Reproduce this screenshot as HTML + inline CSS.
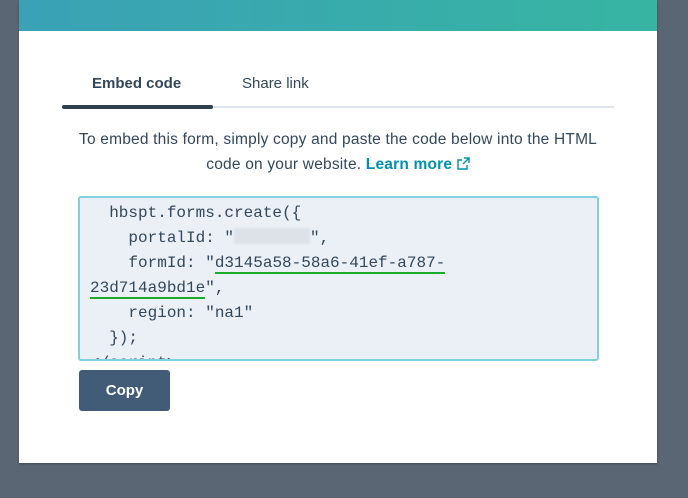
<!DOCTYPE html>
<html><head><style>
*{margin:0;padding:0;box-sizing:border-box}
body{width:688px;height:498px;background:#5b6674;position:relative;overflow:hidden;font-family:"Liberation Sans",sans-serif}
.modal{position:absolute;left:19px;top:0;width:638px;height:463px;background:#fff;box-shadow:0 1px 2px rgba(0,0,0,.3)}
.hdr{height:31px;background:linear-gradient(90deg,#3aa1b6,#37b5a2)}
.tab{position:absolute;top:75px;font-size:15px;color:#33475b}
.line{position:absolute;left:43px;top:106px;width:552px;height:2px;background:#dfe3eb}
.act{position:absolute;left:43px;top:105px;width:151px;height:4px;border-radius:2px;background:#2d3e50}
.desc{position:absolute;left:0;width:638px;text-align:center;font-size:15.5px;letter-spacing:.2px;color:#33475b;top:127px;line-height:25px}
.desc a{color:#0091ae;font-weight:bold;text-decoration:none}
.code{position:absolute;left:59px;top:196px;width:521px;height:165px;background:#eaf0f6;border:2px solid #7fd1de;border-radius:3px;overflow:hidden;font-family:"Liberation Mono",monospace;font-size:16px;line-height:25px;color:#33475b;padding:3px 0 0 10px;white-space:pre}
.u{border-bottom:2px solid #1aab2b}
.blur{display:inline-block;width:76px;height:16px;background:#dde2e8;vertical-align:-2px;filter:blur(1px)}
.btn{position:absolute;left:60px;top:370px;width:91px;height:41px;background:#425b76;border-radius:3px;color:#fff;font-weight:bold;font-size:15px;text-align:center;line-height:41px}
</style></head><body>
<div class="modal">
<div class="hdr"></div>
<div class="tab" style="left:73px;font-weight:bold">Embed code</div>
<div class="tab" style="left:223px">Share link</div>
<div class="line"></div><div class="act"></div>
<div class="desc">To embed this form, simply copy and paste the code below into the HTML<br>code on your website. <a>Learn more</a> <svg width="13" height="13" viewBox="0 0 13 13" style="vertical-align:-1px"><path d="M7 1h5v5M12 1L6 7M10 8v4H1V3h4" fill="none" stroke="#0091ae" stroke-width="1.4"/></svg></div>
<div class="code">  hbspt.forms.create({
    portalId: "<span class="blur"></span>",
    formId: "<span class="u">d3145a58-58a6-41ef-a787-</span>
<span class="u">23d714a9bd1e</span>",
    region: "na1"
  });
&lt;/script&gt;</div>
<div class="btn">Copy</div>
</div>
</body></html>
